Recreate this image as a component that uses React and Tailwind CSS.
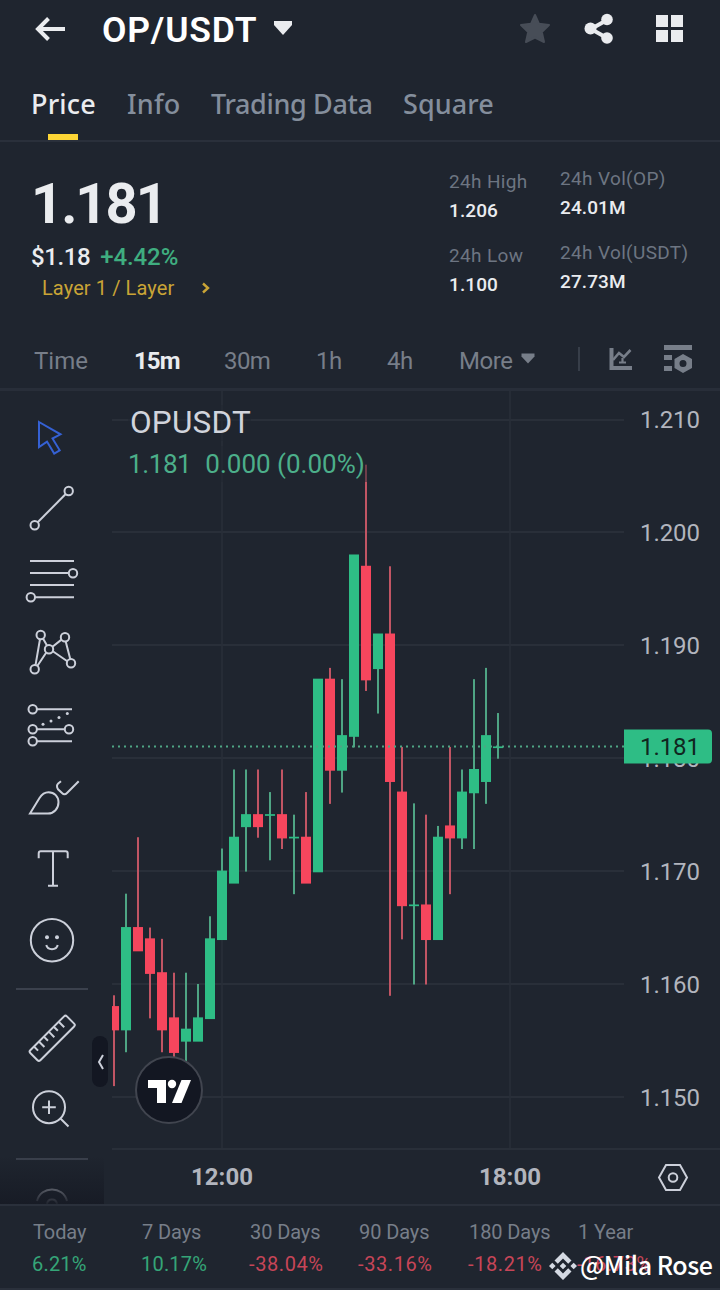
const TABS = [
  { label: 'Price', className: 'w-24 text-[#eaecef] tracking-[0.2px]' },
  { label: 'Info', className: 'w-[84px] text-[#848e9c] tracking-[0.2px]' },
  { label: 'Trading Data', className: 'w-48 text-[#848e9c] tracking-[-0.35px]' },
  { label: 'Square', className: 'text-[#848e9c] tracking-[0.1px]' },
];

const INTERVALS = [
  { label: 'Time', className: 'w-[100px] text-[#777e89]' },
  { label: '15m', className: 'w-[90px] font-bold tracking-[-0.9px] text-[#eaecef]' },
  { label: '30m', className: 'w-[92px] tracking-[-0.6px] text-[#777e89]' },
  { label: '1h', className: 'w-[71px] tracking-[-0.5px] text-[#777e89]' },
  { label: '4h', className: 'w-[72px] tracking-[-0.5px] text-[#777e89]' },
];

const PERFORMANCE = [
  { label: 'Today', value: '6.21%', className: 'w-[109px]' },
  { label: '7 Days', value: '10.17%', className: 'w-[108px]' },
  { label: '30 Days', value: '-38.04%', className: 'w-[109px]' },
  { label: '90 Days', value: '-33.16%', className: 'w-[110px]' },
  { label: '180 Days', value: '-18.21%', className: 'w-[109px]' },
  { label: '1 Year', value: '-16.73%', className: 'w-[109px]' },
];

// [open, high, low, close] in thousandths, one per 15 minutes
const CANDLES = [
  [1158, 1159, 1151, 1156],
  [1156, 1168, 1154, 1165],
  [1165, 1173, 1163, 1163],
  [1164, 1165, 1157, 1161],
  [1161, 1164, 1154, 1156],
  [1157, 1161, 1153, 1154],
  [1155, 1161, 1153, 1156],
  [1155, 1160, 1155, 1157],
  [1157, 1166, 1157, 1164],
  [1164, 1172, 1164, 1170],
  [1169, 1179, 1169, 1173],
  [1174, 1179, 1170, 1175],
  [1175, 1179, 1173, 1174],
  [1175, 1177, 1171, 1175],
  [1175, 1179, 1172, 1173],
  [1173, 1175, 1168, 1173],
  [1173, 1177, 1169, 1169],
  [1170, 1187, 1170, 1187],
  [1187, 1188, 1176, 1179],
  [1179, 1187, 1177, 1182],
  [1182, 1198, 1181, 1198],
  [1197, 1206, 1186, 1187],
  [1188, 1191, 1184, 1191],
  [1191, 1197, 1159, 1178],
  [1177, 1181, 1164, 1167],
  [1167, 1176, 1160, 1167],
  [1167, 1175, 1160, 1164],
  [1164, 1174, 1164, 1173],
  [1174, 1181, 1168, 1173],
  [1173, 1179, 1172, 1177],
  [1177, 1187, 1172, 1179],
  [1178, 1188, 1176, 1182],
  [1181, 1184, 1180, 1181],
];

const GRID_PRICES = [1210, 1200, 1190, 1180, 1170, 1160, 1150];

const priceToY = (price) => 28.5 + (1210 - price) * 11.29;

function ToolIcon({ children }) {
  return (
    <svg
      className="h-[72px] w-[72px] shrink-0"
      viewBox="0 0 72 72"
      fill="none"
      stroke="#ccd0da"
      strokeWidth="2"
    >
      {children}
    </svg>
  );
}

function Toolbar() {
  return (
    <div className="relative flex h-[813px] w-[104px] shrink-0 flex-col items-start overflow-hidden pt-[10px] pl-4">
      <ToolIcon>
        <path d="M23 21L44.5 33.3L36.5 37.5L43.7 49.3L38.2 52.6L31 40.6L23 46Z" stroke="#3561d4" />
      </ToolIcon>
      <ToolIcon>
        <circle cx="52.7" cy="18" r="4.2" />
        <circle cx="18.7" cy="52.3" r="4.2" />
        <path d="M49.7 21L21.7 49.3" />
      </ToolIcon>
      <ToolIcon>
        <path d="M14 16H58M14 28H52.8M14 40H58M19 52.2H58" />
        <circle cx="57" cy="28.2" r="4.2" />
        <circle cx="14.8" cy="52.2" r="4.2" />
      </ToolIcon>
      <ToolIcon>
        <circle cx="24.7" cy="18" r="4.2" />
        <circle cx="49" cy="20.2" r="4.2" />
        <circle cx="33" cy="32.2" r="4.2" />
        <circle cx="18.7" cy="52.3" r="4.2" />
        <circle cx="55" cy="46.3" r="4.2" />
        <path d="M24 22.2L19.5 48.2M27 21.6L31 28.5M36.5 29.8L45.5 22.6M30.3 35.5L21.3 49M36.8 34.2L51.3 44.2M49.7 24.4L54.3 42.2" />
      </ToolIcon>
      <ToolIcon>
        <circle cx="16.7" cy="20.2" r="4.2" />
        <circle cx="16.7" cy="40.2" r="4.2" />
        <circle cx="53" cy="40.2" r="4.2" />
        <circle cx="16.7" cy="52.2" r="4.2" />
        <path d="M21 20.2H56M21 40.2H48.8M21 52.2H56" />
        <g fill="#ccd0da" stroke="none">
          <circle cx="27" cy="35.3" r="1.5" />
          <circle cx="35" cy="32" r="1.5" />
          <circle cx="43" cy="28.4" r="1.5" />
          <circle cx="51.3" cy="24.4" r="1.5" />
        </g>
      </ToolIcon>
      <ToolIcon>
        <path d="M14 52.5L23.5 37C26 33 29 31.2 32.5 31.2C38.5 31.2 42.5 35.7 42.5 41.2C42.5 47.5 38 52.5 32 52.5Z" />
        <path d="M45 20.3L42.2 22.5C40.5 24 40.7 26 42 28.3L46 32Q48.5 34.5 51 32L62.7 20.3" />
      </ToolIcon>
      <ToolIcon>
        <path d="M22.7 25.3V20.5Q22.7 18.3 24.7 18.3H49.7Q51.7 18.3 51.7 20.5V25.3M37 18.3V52.7M32 52.7H42" />
      </ToolIcon>
      <ToolIcon>
        <circle cx="36" cy="35.3" r="21.2" />
        <path d="M30.3 40C31.5 45.5 40.5 45.5 41.7 40" />
        <g fill="#ccd0da" stroke="none">
          <circle cx="31" cy="32.3" r="2" />
          <circle cx="41" cy="32.3" r="2" />
        </g>
      </ToolIcon>
      <div className="mt-[11px] h-0.5 w-[72px] shrink-0 bg-[#3b414d]" />
      <div className="mt-3 flex flex-col">
        <ToolIcon>
          <g transform="rotate(-45 36.2 36.3)">
            <rect x="10.3" y="29.2" width="51.8" height="14.2" rx="2" />
            <path d="M17.5 29.2V35M24.5 29.2V37M31.5 29.2V35M38.5 29.2V37M45.5 29.2V35M52.5 29.2V37" />
          </g>
        </ToolIcon>
        <ToolIcon>
          <circle cx="33" cy="33.2" r="16" />
          <path d="M26.2 33.2H39.8M33 26.4V40M44.7 44.7L52.5 52.5" />
        </ToolIcon>
      </div>
      <div className="mt-3 h-0.5 w-[72px] shrink-0 bg-[#3b414d]" />
      <svg
        className="mt-[26px] h-[18px] w-[72px] shrink-0"
        viewBox="0 0 72 18"
        fill="none"
        stroke="#ccd0da"
        strokeWidth="2"
      >
        <path d="M21 15C25 -0.5 47 -0.5 51 15M31 18C32 12 40 12 41 18" />
      </svg>
      <div className="absolute bottom-0 left-0 h-12 w-full bg-linear-to-b from-[#171b25]/0 to-[#171b25]/95" />
    </div>
  );
}

function Candle({ candle, x }) {
  const [open, high, low, close] = candle;
  const up = close >= open;
  const top = priceToY(Math.max(open, close));
  const bottom = priceToY(Math.min(open, close));
  return (
    <g fill={up ? '#2ebd85' : '#f6465d'}>
      <rect
        x={x - 1}
        y={priceToY(high)}
        width="2"
        height={priceToY(low) - priceToY(high) + 0.5}
        fill={up ? '#4fa584' : '#c15564'}
      />
      <rect x={x - 5} y={top - 0.5} width="10" height={bottom - top + 1.7} />
    </g>
  );
}

function Chart() {
  return (
    <div className="relative h-[813px] w-[616px]">
      <svg className="block h-[813px] w-[616px]" viewBox="104 0 616 813" fontFamily="Roboto, sans-serif">
        <defs>
          <clipPath id="pane">
            <rect x="112" y="0" width="512" height="757" />
          </clipPath>
        </defs>

        {/* Grid */}
        <g fill="#292f39">
          {GRID_PRICES.map((price) => (
            <rect key={price} x="112" y={Math.round(priceToY(price) - 1)} width="512" height="2" />
          ))}
          <rect x="221.2" y="0" width="1.6" height="757" />
          <rect x="509.2" y="0" width="1.6" height="757" />
          <rect x="112" y="757" width="608" height="2" />
        </g>

        <g clipPath="url(#pane)">
          {CANDLES.map((candle, i) => (
            <Candle key={i} candle={candle} x={114 + i * 12} />
          ))}
        </g>
        <path d="M112 355.5H624" stroke="#4fa584" strokeWidth="2" strokeDasharray="2 4" />

        {/* Price scale */}
        <g fill="#b2b5be" fontSize="24">
          {GRID_PRICES.map((price) => (
            <text key={price} x="640" y={priceToY(price) + 8.9} textLength="60">
              {(price / 1000).toFixed(3)}
            </text>
          ))}
        </g>
        <path d="M624 338.5H708Q712 338.5 712 342.5V368.5Q712 372.5 708 372.5H624Z" fill="#2ebd85" />
        <text x="640" y="364.3" fontSize="24" textLength="60" fill="#10271f">
          1.181
        </text>

        {/* Time scale */}
        <g fill="#b2b5be" fontSize="24" fontWeight="700">
          <text x="191" y="794" textLength="62">12:00</text>
          <text x="479" y="794" textLength="62">18:00</text>
        </g>
        <g fill="none" stroke="#ccd0da" strokeWidth="2">
          <path d="M666 774H680L687 786.5L680 799H666L659 786.5Z" />
          <circle cx="673" cy="786.5" r="4.3" />
        </g>

        {/* Logo */}
        <circle cx="169" cy="699" r="33" fill="#131722" stroke="#41454f" strokeWidth="2" />
        <g fill="#fff">
          <path d="M148 689H166V712H157V697H148Z" />
          <circle cx="172" cy="693" r="4.2" />
          <path d="M181.5 689H191L181.5 712H172Z" />
        </g>
      </svg>

      <div className="absolute top-[14px] left-6 bg-[#1f252f]/50 pl-0.5 font-[Roboto,sans-serif] text-[31.5px] leading-9 tracking-[0.2px] text-[#d1d4dc]">
        OPUSDT
      </div>
      <div className="absolute top-[55px] left-[22px] flex gap-[14px] bg-[#1f252f]/50 pr-2 pl-0.5 font-[Roboto,sans-serif] text-[26px] leading-9 text-[#4caf8a]">
        <span className="tracking-[-0.4px]">1.181</span>
        <span>0.000 (0.00%)</span>
      </div>

      {/* Toolbar toggle */}
      <div className="absolute top-[645px] -left-3 flex h-[51px] w-4 items-center justify-center rounded-lg bg-[#131722]">
        <svg className="h-4 w-2" viewBox="0 0 8 16" fill="none" stroke="#ccd0da" strokeWidth="2">
          <path d="M7 1L3 8L7 15" />
        </svg>
      </div>
    </div>
  );
}

function Stat({ label, value }) {
  return (
    <div className="h-[74px]">
      <div className="text-[19px] leading-6 tracking-[0.35px] whitespace-nowrap text-[#6d7582]">{label}</div>
      <div className="mt-[5px] text-[19px] leading-6 font-medium tracking-[0.1px] text-[#eaecef]">{value}</div>
    </div>
  );
}

export default function App() {
  return (
    <div className="relative flex h-[1290px] w-[720px] flex-col overflow-hidden bg-[#1f252f] font-[Roboto,sans-serif]">
      {/* Header */}
      <header className="flex h-[60px] shrink-0 items-center pl-[34px]">
        <svg className="mt-[-3px] h-7 w-8 shrink-0" viewBox="0 0 32 28" fill="none" stroke="#eaecef" strokeWidth="4">
          <path d="M3.5 14H31M14.5 3.5L4 14L14.5 24.5" />
        </svg>
        <h1 className="ml-9 w-[171px] text-[35.5px] leading-[60px] font-semibold tracking-[0.8px] whitespace-nowrap text-white">
          OP/USDT
        </h1>
        <svg className="mt-[-4px] h-4 w-5 shrink-0" viewBox="0 0 20 16" fill="#eaecef">
          <path d="M1 1H19V5L10 15L1 5Z" />
        </svg>
        <svg className="mt-[-3px] ml-[226px] h-8 w-8 shrink-0" viewBox="0 0 32 32" fill="#474d57" stroke="#474d57" strokeWidth="2" strokeLinejoin="round">
          <path d="M16 2L20 10.8L30 12L22.8 19L25 29L16 24.5L7 29L9.2 19L2 12L12 10.8Z" />
        </svg>
        <svg className="mt-[-3px] ml-[33px] h-8 w-8 shrink-0" viewBox="0 0 32 32" fill="#eaecef">
          <path d="M7 16L23 7M7 16L23 25" stroke="#eaecef" strokeWidth="4" />
          <circle cx="6.5" cy="15.5" r="6" />
          <circle cx="23" cy="6.5" r="5.8" />
          <circle cx="23" cy="25" r="5.8" />
        </svg>
        <div className="mt-[-3px] ml-10 grid grid-cols-2 gap-[3px]">
          <div className="h-3 w-3 bg-[#eaecef]" />
          <div className="h-3 w-3 bg-[#eaecef]" />
          <div className="h-3 w-3 bg-[#eaecef]" />
          <div className="h-3 w-3 bg-[#eaecef]" />
        </div>
      </header>

      {/* Tabs */}
      <nav className="flex h-[82px] shrink-0 border-b-2 border-[#2a303b] pl-[31px] font-['Noto_Sans',sans-serif] text-[27px] font-medium">
        {TABS.map((tab, i) => (
          <div key={tab.label} className={tab.className}>
            <div className="h-[74px] leading-[88px] whitespace-nowrap">{tab.label}</div>
            {i === 0 && <div className="ml-[17px] h-[6px] w-[30px] bg-[#fcd535]" />}
          </div>
        ))}
      </nav>

      {/* Ticker */}
      <section className="flex h-[188px] shrink-0">
        <div className="w-[449px] pt-[31px] pl-[31px]">
          <div className="text-[56px] leading-[62px] font-bold tracking-[-2px] text-[#eaecef]">1.181</div>
          <div className="mt-[7px] flex gap-[10px] text-[24px] leading-[30px] tracking-[-0.4px]">
            <span className="font-medium text-[#eaecef]">$1.18</span>
            <span className="font-medium tracking-[-0.1px] text-[#3fae80]">+4.42%</span>
          </div>
          <div className="flex items-center pl-[11px] text-[20px] leading-8 tracking-[0.1px] text-[#c9a436]">
            <span className="w-[160px]">Layer 1 / Layer</span>
            <svg className="h-3 w-2" viewBox="0 0 8 12" fill="none" stroke="#c9a436" strokeWidth="2.4">
              <path d="M1 1.5L6 6L1 10.5" />
            </svg>
          </div>
        </div>
        <div className="w-[111px] pt-7">
          <Stat label="24h High" value="1.206" />
          <Stat label="24h Low" value="1.100" />
        </div>
        <div className="pt-[25px]">
          <Stat label="24h Vol(OP)" value="24.01M" />
          <Stat label="24h Vol(USDT)" value="27.73M" />
        </div>
      </section>

      {/* Intervals */}
      <div className="flex h-[61px] shrink-0 items-center border-b-3 border-[#282e39] pt-[3px] pl-[34px] text-[24px] text-[#777e89]">
        {INTERVALS.map((interval) => (
          <span key={interval.label} className={interval.className}>
            {interval.label}
          </span>
        ))}
        <span className="w-[62px] tracking-[-0.4px]">More</span>
        <svg className="mt-[-5px] h-[11px] w-3.5" viewBox="0 0 14 11" fill="#777e89">
          <path d="M0.5 0.5H13.5V3.5L7 10.5L0.5 3.5Z" />
        </svg>
        <div className="mt-[-3px] ml-[43px] h-6 w-0.5 bg-[#373e49]" />
        <svg className="mt-[-4px] ml-[29px] h-6 w-6 shrink-0" viewBox="0 0 24 24" fill="none" stroke="#777e89">
          <path d="M2.5 1V21H23" strokeWidth="4" />
          <path d="M4 13L10 6L15 10L21.5 3" strokeWidth="2.6" />
          <path d="M10 15.5H17M13.5 11V15" strokeWidth="2.2" />
        </svg>
        <svg className="mt-[-3px] ml-[31px] h-7 w-7 shrink-0" viewBox="0 0 28 28" fill="#777e89">
          <path d="M0 0H28V5H0ZM0 10H8V15H0ZM0 21H8V26H0Z" />
          <path fillRule="evenodd" d="M19 9L28 14V23L19 28L10.5 23V14ZM19 15A3.5 3.5 0 1 0 19 22A3.5 3.5 0 1 0 19 15Z" />
        </svg>
      </div>

      {/* Chart */}
      <main className="flex h-[813px] shrink-0">
        <Toolbar />
        <Chart />
      </main>

      {/* Performance */}
      <footer className="flex h-[86px] shrink-0 border-y-2 border-[#2a303b] pt-3 pl-[33px]">
        {PERFORMANCE.map((item) => (
          <div key={item.label} className={item.className}>
            <div className="text-[20px] leading-7 tracking-[-0.1px] whitespace-nowrap text-[#777e89]">{item.label}</div>
            <div
              className={`mt-1 -ml-px text-[20px] leading-7 ${
                item.value.startsWith('-') ? 'tracking-[0.6px] text-[#c74558]' : 'tracking-[0.2px] text-[#35a578]'
              }`}
            >
              {item.value}
            </div>
          </div>
        ))}
      </footer>

      {/* Author badge */}
      <div className="absolute top-[1246px] left-[549px] flex h-10 items-center">
        <svg className="h-7 w-7" viewBox="0 0 28 28" fill="#d5dae3">
          <path d="M14 0L22.5 8.5L19.2 11.8L14 6.6L8.8 11.8L5.5 8.5Z" />
          <path d="M14 28L22.5 19.5L19.2 16.2L14 21.4L8.8 16.2L5.5 19.5Z" />
          <path d="M14 10.7L17.3 14L14 17.3L10.7 14ZM3.3 10.7L6.6 14L3.3 17.3L0 14ZM24.7 10.7L28 14L24.7 17.3L21.4 14Z" />
        </svg>
        <span className="mt-[-2px] ml-[3px] font-['Noto_Sans_CJK_SC',sans-serif] text-[25px] font-medium tracking-[-0.5px] whitespace-nowrap text-white">
          @Mila Rose
        </span>
      </div>
    </div>
  );
}
